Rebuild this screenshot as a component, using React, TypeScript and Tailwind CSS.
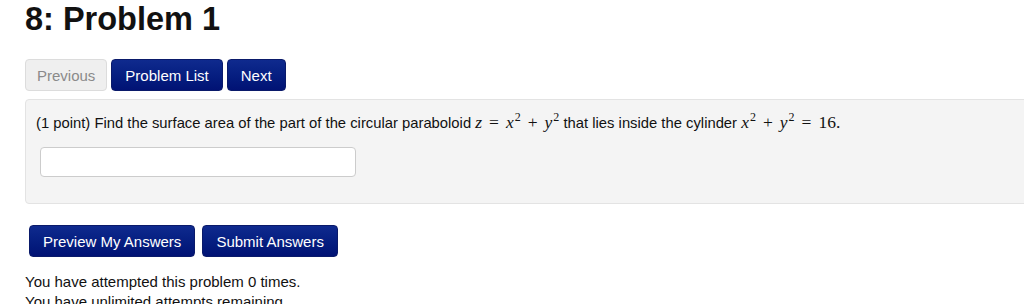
import React from 'react';

const sans = { fontFamily: '"Liberation Sans", Arial, Helvetica, sans-serif' };

const blueBtn =
  'h-[32px] px-[13px] rounded-[4px] border border-[#0a1a6a] bg-gradient-to-b from-[#0f2a8e] to-[#011274] text-white text-[15px] leading-none';

/** Inline math in a MathJax-like serif look */
const M: React.FC<{ children: React.ReactNode }> = ({ children }) => (
  <span className="font-['Liberation_Serif',serif] text-[17.5px] whitespace-nowrap">{children}</span>
);
const V: React.FC<{ children: React.ReactNode }> = ({ children }) => <i>{children}</i>;
const Sup: React.FC<{ children: React.ReactNode }> = ({ children }) => (
  <sup className="text-[12px] relative top-[-7px] ml-[1px]">{children}</sup>
);
const Op: React.FC<{ children: React.ReactNode }> = ({ children }) => (
  <span className="mx-[7px]">{children}</span>
);

const App: React.FC = () => {
  return (
    <div className="h-[304px] w-[1024px] overflow-hidden bg-white text-[#222]" style={sans}>
      <div className="pl-[25px]">
        {/* Title */}
        <h1 className="pt-[1px] text-[32.5px] leading-[36px] font-bold text-[#111]">8: Problem 1</h1>

        {/* Nav buttons */}
        <div className="mt-[22px] flex gap-[4px]">
          <button className="h-[32px] px-[11px] rounded-[4px] border border-[#dcdcdc] bg-[#efefef] text-[#8a8a8a] text-[15px] leading-none">
            Previous
          </button>
          <button className={blueBtn}>Problem List</button>
          <button className={blueBtn}>Next</button>
        </div>

        {/* Problem well */}
        <div className="mt-[8px] w-[1020px] h-[105px] rounded-[4px] border border-[#e3e3e3] bg-[#f4f4f4] pl-[10px] pt-[11px]">
          <p className="text-[14.8px] leading-[22px] text-[#111]">
            (1 point) Find the surface area of the part of the circular paraboloid{' '}
            <M>
              <V>z</V>
              <Op>=</Op>
              <V>x</V>
              <Sup>2</Sup>
              <Op>+</Op>
              <V>y</V>
              <Sup>2</Sup>
            </M>{' '}
            that lies inside the cylinder{' '}
            <M>
              <V>x</V>
              <Sup>2</Sup>
              <Op>+</Op>
              <V>y</V>
              <Sup>2</Sup>
              <Op>=</Op>16.
            </M>
          </p>
          <input
            type="text"
            className="mt-[13px] ml-[4px] block w-[316px] h-[30px] rounded-[4px] border border-[#cccccc] bg-white"
          />
        </div>

        {/* Submit buttons */}
        <div className="mt-[21px] ml-[4px] flex gap-[7px]">
          <button className={blueBtn}>Preview My Answers</button>
          <button className={blueBtn}>Submit Answers</button>
        </div>

        {/* Attempts */}
        <div className="mt-[15px] text-[15px] leading-[20px] text-[#111]">
          <p>You have attempted this problem 0 times.</p>
          <p>You have unlimited attempts remaining.</p>
        </div>
      </div>
    </div>
  );
};

export default App;
